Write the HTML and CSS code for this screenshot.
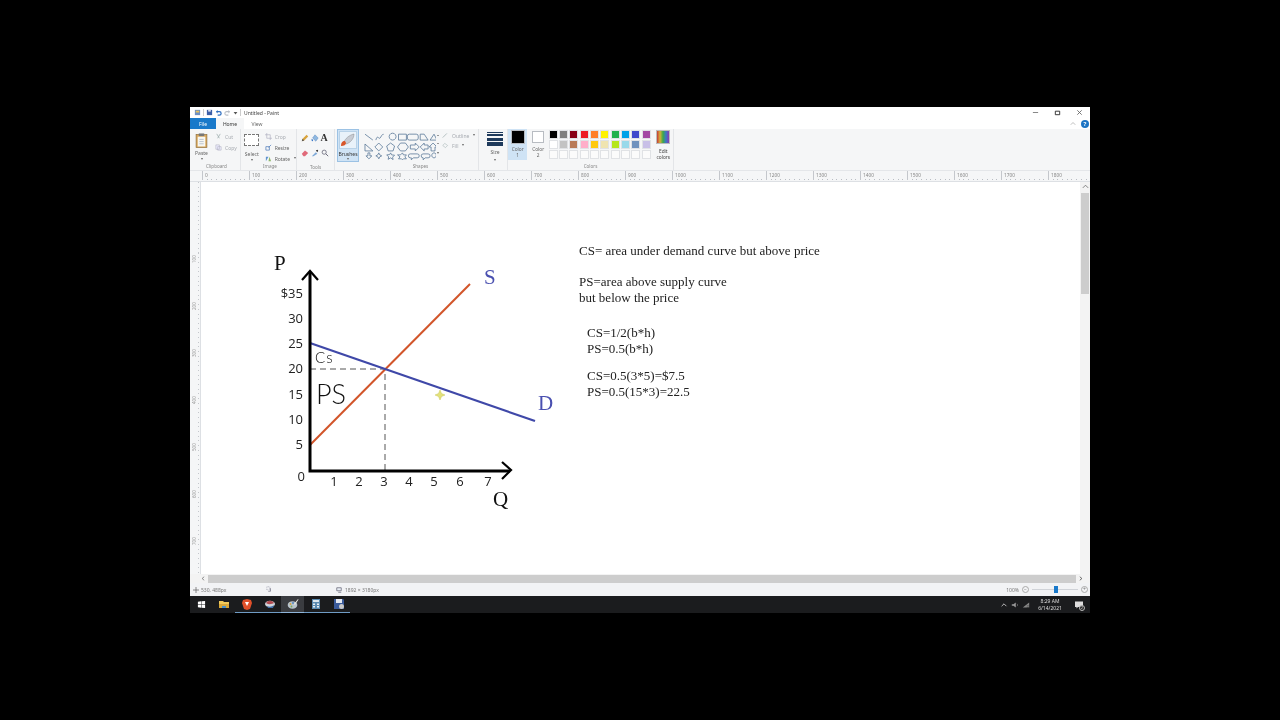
FILE: index.html
```html
<!DOCTYPE html>
<html lang="en">
<head>
  <meta charset="UTF-8" />
  <title>Untitled - Paint</title>
  <link rel="stylesheet" href="styles.css">
</head>
<body>
  <div class="screen">
    <div class="titlebar">
      <div class="quick">
        <svg class="qicon" viewBox="0 0 8 8"><rect x="1" y="1" width="6" height="6" fill="#6d8fc4"/><rect x="2" y="2" width="4" height="2" fill="#e8c15a"/></svg>
        <span class="qsep"></span>
        <svg class="qicon" viewBox="0 0 8 8"><rect x="1" y="1" width="6" height="6" fill="#3d5fa8"/><rect x="2.5" y="1" width="3" height="2" fill="#dfe6f2"/></svg>
        <svg class="qicon" viewBox="0 0 8 8"><path d="M2 3h3a2 2 0 0 1 0 4H3" fill="none" stroke="#2f6fc0" stroke-width="1.4"/><path d="M3 1 1 3l2 2z" fill="#2f6fc0"/></svg>
        <svg class="qicon" viewBox="0 0 8 8"><path d="M6 3H3a2 2 0 0 0 0 4h2" fill="none" stroke="#b9bec6" stroke-width="1.2"/><path d="M5 1l2 2-2 2z" fill="#b9bec6"/></svg>
        <svg class="qicon small" viewBox="0 0 8 8"><path d="M1 3h6L4 7z" fill="#555"/></svg>
        <span class="qsep"></span>
      </div>
      <span class="doc-title">Untitled - Paint</span>
      <div class="winbtns">
        <span class="winbtn"><svg viewBox="0 0 8 8"><path d="M1 4h6" stroke="#777"/></svg></span>
        <span class="winbtn"><svg viewBox="0 0 8 8"><path d="M1.5 2.5h5v4h-5z" fill="none" stroke="#222"/></svg></span>
        <span class="winbtn"><svg viewBox="0 0 8 8"><path d="M1.5 1.5l5 5M6.5 1.5l-5 5" stroke="#666"/></svg></span>
      </div>
    </div>

    <div class="tabs">
      <span class="tab tab-file">File</span>
      <span class="tab tab-active">Home</span>
      <span class="tab">View</span>
      <span class="help-wrap">
        <svg class="chev" viewBox="0 0 8 8"><path d="M1 5l3-3 3 3" fill="none" stroke="#aaa"/></svg>
        <span class="help">?</span>
      </span>
    </div>

    <div class="ribbon">
      <div class="group g-clipboard">
        <div class="group-body">
          <div class="bigbtn">
            <svg class="paste" viewBox="0 0 12 15"><rect x="1" y="2" width="10" height="12" fill="#d9a85c" stroke="#8a6a3a" stroke-width=".6"/><rect x="2.5" y="4" width="7" height="9" fill="#f7f7f2"/><rect x="3.5" y="1" width="5" height="2.4" fill="#777"/><path d="M4 6.500h4M4 8.500h4M4 10.500h4" stroke="#a9b4c4" stroke-width=".7"/></svg>
            <span>Paste</span>
            <i class="drop"></i>
          </div>
          <div class="stack muted">
            <span class="row"><svg viewBox="0 0 8 8"><path d="M2 1l3 5M6 1L3 6" stroke="#9aa" stroke-width=".8"/></svg>Cut</span>
            <span class="row"><svg viewBox="0 0 8 8"><path d="M1 1h4v5H1zM3 3h4v4H3z" fill="#eef" stroke="#aab" stroke-width=".6"/></svg>Copy</span>
          </div>
        </div>
        <div class="group-label">Clipboard</div>
      </div>

      <div class="group g-image">
        <div class="group-body">
          <div class="bigbtn select">
            <span class="marquee"></span>
            <span>Select</span>
            <i class="drop"></i>
          </div>
          <div class="stack">
            <span class="row muted"><svg viewBox="0 0 8 8"><path d="M2 0v6h6M0 2h6v6" fill="none" stroke="#aab" stroke-width=".7"/></svg>Crop</span>
            <span class="row"><svg viewBox="0 0 8 8"><path d="M1 3h4v4H1z" fill="none" stroke="#4a78b8" stroke-width=".8"/><path d="M4 4l3-3" stroke="#4a78b8" stroke-width=".8"/></svg>Resize</span>
            <span class="row"><svg viewBox="0 0 8 8"><path d="M1 2h3l-3 5z" fill="#5e93d0"/><path d="M5 2l2 5H4z" fill="#8fb66a"/></svg>Rotate <i class="drop inline"></i></span>
          </div>
        </div>
        <div class="group-label">Image</div>
      </div>

      <div class="group g-tools">
        <div class="tool-grid">
          <svg viewBox="0 0 10 10"><path d="M1 9l1-3 5-5 2 2-5 5z" fill="#d8a33c"/><path d="M1 9l1-3 2 2z" fill="#555"/></svg>
          <svg viewBox="0 0 10 10"><path d="M5 1l4 4-3 4-4-4z" fill="#8fb8e0" stroke="#4a78b8" stroke-width=".5"/><path d="M1 6c-1 2 0 3 1 3s1-2-1-3z" fill="#3a78c8"/></svg>
          <span class="tool-a">A</span>
          <svg viewBox="0 0 10 10"><path d="M1 6l4-4 4 3-4 4H3z" fill="#e06a7a"/></svg>
          <svg viewBox="0 0 10 10"><path d="M1 9l5-5 2 2-5 3z" fill="#7ca8d8"/><path d="M6 2l2 2 1-2-1-1z" fill="#333"/></svg>
          <svg viewBox="0 0 10 10"><circle cx="4" cy="4" r="2.600" fill="none" stroke="#667" stroke-width="1"/><path d="M6 6l3 3" stroke="#667" stroke-width="1.200"/></svg>
        </div>
        <div class="group-label">Tools</div>
      </div>

      <div class="brushes">
        <svg viewBox="0 0 16 16"><path d="M14 2C9 3 5 7 4 10l2 2c4-1 8-5 8-10z" fill="#c8ccd4" stroke="#777" stroke-width=".4"/><path d="M5 9c-3 0-4 2-4 5 3 0 5-1 5-3z" fill="#d8562a"/></svg>
        <span>Brushes</span>
        <i class="drop"></i>
      </div>

      <div class="group g-shapes">
        <div class="shapes-body">
          <div class="gallery">
            <svg viewBox="0 0 74 28" fill="none" stroke="#5a7898" stroke-width=".8">
              <path d="M2 2l8 6M13 8c2-7 3 1 5-3s2-2 3-3M30 1a3.500 3.500 0 1 0 .01 0M36 2h8v6h-8zM47 2h7q2 0 2 2v2q0 2-2 2h-7q-2 0-2-2V4q0-2 2-2zM58 8V2h4l4 6zM72 2l3 6h-7z"/>
              <path d="M2 19l8 0-8-7zM16 11l4 4-4 4-4-4zM28 11l4 3-1.500 5h-5L24 14zM38 11h5l3 4-3 4h-5l-3-4zM48 13h5v-2l4 4-4 4v-2h-5zM66 13h-4v-2l-4 4 4 4v-2h4zM75 15h-2v4h-4v-4h-2l4-4z"/>
              <path d="M5 21v3H3l3 3 3-3H7v-3zM16 21l1 2 2 1-2 1-1 2-1-2-2-1 2-1zM28 21l1 2 3 .300-2 2 .500 2.500L28 26l-2.500 1.500.5-2.500-2-2 3-.300zM40 21l1 2h3l-1.500 2 1.500 2h-3l-1 1-1-1h-3l1.500-2L35 23h3zM48 22h7q2 0 2 2t-2 2h-4l-2 2v-2h-1q-2 0-2-2t2-2zM61 22h5q2 0 2 2t-2 2h-3l-2 2v-2q-2 0-2-2t2-2zM72 21c3 0 3 5 0 5-3 0-3-5 0-5z"/>
            </svg>
            <div class="gallery-scroll"><i></i><i></i><i class="drop"></i></div>
          </div>
          <div class="stack muted outline">
            <span class="row"><svg viewBox="0 0 10 8"><path d="M1 7l6-6" stroke="#9aa" stroke-width="1"/></svg>Outline <i class="drop inline"></i></span>
            <span class="row"><svg viewBox="0 0 10 8"><path d="M4 1l4 3-3 3-4-3z" fill="none" stroke="#9aa" stroke-width=".7"/></svg>Fill <i class="drop inline"></i></span>
          </div>
        </div>
        <div class="group-label">Shapes</div>
      </div>

      <div class="group g-size">
        <div class="bigbtn size">
          <div class="size-lines"><i class="l1"></i><i class="l2"></i><i class="l3"></i><i class="l4"></i></div>
          <span>Size</span>
          <i class="drop"></i>
        </div>
      </div>

      <div class="group g-colors">
        <div class="colors-body">
          <div class="color-btn active">
            <span class="chip chip-black"></span>
            <span>Color<br>1</span>
          </div>
          <div class="color-btn">
            <span class="chip chip-white"></span>
            <span>Color<br>2</span>
          </div>
          <div class="palette">
            <i class="c-black"></i><i class="c-gray"></i><i class="c-maroon"></i><i class="c-red"></i><i class="c-orange"></i><i class="c-yellow"></i><i class="c-green"></i><i class="c-sky"></i><i class="c-indigo"></i><i class="c-purple"></i>
            <i class="c-white"></i><i class="c-silver"></i><i class="c-brown"></i><i class="c-pink"></i><i class="c-gold"></i><i class="c-cream"></i><i class="c-lime"></i><i class="c-ice"></i><i class="c-steel"></i><i class="c-lilac"></i>
            <i></i><i></i><i></i><i></i><i></i><i></i><i></i><i></i><i></i><i></i>
          </div>
          <div class="edit-colors">
            <span class="rainbow"></span>
            <span>Edit<br>colors</span>
          </div>
        </div>
        <div class="group-label">Colors</div>
      </div>
    </div>

    <div class="ruler-top">
      <span>0</span><span>100</span><span>200</span><span>300</span><span>400</span><span>500</span><span>600</span><span>700</span><span>800</span><span>900</span><span>1000</span><span>1100</span><span>1200</span><span>1300</span><span>1400</span><span>1500</span><span>1600</span><span>1700</span><span>1800</span>
    </div>

    <div class="workspace">
      <div class="ruler-left">
        <span>100</span><span>200</span><span>300</span><span>400</span><span>500</span><span>600</span><span>700</span><span>800</span>
      </div>
      <div class="canvas">
        <svg class="graph" viewBox="201 181 879 392">
          <path class="dash" d="M310 368H385V469"/>
          <path class="supply" d="M310 444L470 283"/>
          <path class="demand" d="M310 342L535 420"/>
          <path class="axis" d="M310 271V470H510"/>
          <path class="axis-head" d="M302 279L310 270L318 279M502 461L511 469L502 478"/>
          <text class="curve-name" x="484" y="283">S</text>
          <text class="curve-name" x="538" y="409">D</text>
          <text class="axis-name" x="274" y="269">P</text>
          <text class="axis-name" x="493" y="505">Q</text>
          <g class="tick-y">
            <text x="303" y="297">$35</text>
            <text x="303" y="322">30</text>
            <text x="303" y="347">25</text>
            <text x="303" y="372">20</text>
            <text x="303" y="398">15</text>
            <text x="303" y="423">10</text>
            <text x="303" y="448">5</text>
            <text x="305" y="480">0</text>
          </g>
          <g class="tick-x">
            <text x="334" y="485">1</text>
            <text x="359" y="485">2</text>
            <text x="384" y="485">3</text>
            <text x="409" y="485">4</text>
            <text x="434" y="485">5</text>
            <text x="460" y="485">6</text>
            <text x="488" y="485">7</text>
          </g>
          <text class="ink ink-cs" x="315" y="362">Cs</text>
          <text class="ink ink-ps" x="316" y="403">PS</text>
          <path class="pointer" d="M440 389l1.500 3.500 3.500 1.500-3.500 1.500-1.500 3.500-1.500-3.500-3.500-1.500 3.500-1.500z"/>
        </svg>
        <div class="notes">
          <p class="note-first">CS= area under demand curve but above price</p>
          <p class="note-gap">PS=area above supply curve<br>but below the price</p>
          <p class="note-indent note-formula">CS=1/2(b*h)<br>PS=0.5(b*h)</p>
          <p class="note-indent note-calc">CS=0.5(3*5)=$7.5<br>PS=0.5(15*3)=22.5</p>
        </div>
      </div>
      <div class="vscroll">
        <svg viewBox="0 0 10 10"><path d="M2 6l3-3 3 3" fill="none" stroke="#777"/></svg>
        <div class="vthumb"></div>
      </div>
    </div>

    <div class="hscroll">
      <svg viewBox="0 0 10 9"><path d="M6 2L3 4.500 6 7" fill="none" stroke="#666"/></svg>
      <div class="hthumb"></div>
      <svg viewBox="0 0 10 9"><path d="M4 2l3 2.500L4 7" fill="none" stroke="#333"/></svg>
    </div>

    <div class="statusbar">
      <span class="st-pos"><svg viewBox="0 0 8 8"><path d="M4 0v8M0 4h8" stroke="#666"/></svg>530, 488px</span>
      <span class="st-sel"><svg viewBox="0 0 8 8"><path d="M1 1h4v4H1z" fill="none" stroke="#99a" stroke-dasharray="1 1"/><path d="M6 3v4H3" fill="none" stroke="#778"/></svg></span>
      <span class="st-size"><svg viewBox="0 0 8 8"><path d="M1 1h6v4H1z" fill="#e9eef5" stroke="#667"/><path d="M3 7h4" stroke="#667"/></svg>1892 × 3180px</span>
      <span class="zoom">
        <span>100%</span>
        <span class="zoom-btn">−</span>
        <span class="zoom-track"><i></i></span>
        <span class="zoom-btn">+</span>
      </span>
    </div>

    <div class="taskbar">
      <span class="task start">
        <svg viewBox="0 0 10 10"><path d="M1 2l3.500-.500V4.800H1zM5 1.400L9 1v3.800H5zM1 5.200h3.500v3.300L1 8zM5 5.200h4V9l-4-.500z" fill="#fff"/></svg>
      </span>
      <span class="task">
        <svg viewBox="0 0 12 12"><path d="M1 3h4l1 1h5v6H1z" fill="#f0c95a"/><path d="M1 6h10v4H1z" fill="#d9a83a"/><path d="M4 8h4v2H4z" fill="#4a90c8"/></svg>
      </span>
      <span class="task open">
        <svg viewBox="0 0 12 12"><path d="M2 2l4-1 4 1 1 3-2 6-3 1-3-1-2-6z" fill="#e0502a"/><path d="M4 4h4L6 8z" fill="#fff"/></svg>
      </span>
      <span class="task open">
        <svg viewBox="0 0 12 12"><ellipse cx="6" cy="6" rx="5" ry="3.200" fill="#cfd4da"/><path d="M2 5c2-3 6-3 8 0-2 1-5 2-8 0z" fill="#b04a50"/><path d="M3 8c2 1 5 1 7-1l-1 3H4z" fill="#3f6ea8"/></svg>
      </span>
      <span class="task active">
        <svg viewBox="0 0 12 12"><ellipse cx="5.500" cy="7" rx="4.800" ry="3.800" fill="#b8c4cc"/><circle cx="3.500" cy="6" r=".9" fill="#d8a33c"/><circle cx="6" cy="5" r=".9" fill="#4a80c0"/><circle cx="4.500" cy="8.500" r=".9" fill="#7aa858"/><path d="M7 6l4-5 .5.500-3.500 5.500z" fill="#e8e8e0"/></svg>
      </span>
      <span class="task open">
        <svg viewBox="0 0 12 12"><rect x="2" y="1" width="8" height="10" fill="#5a8ab0"/><rect x="3" y="2" width="6" height="2" fill="#dbe6ee"/><path d="M3 5.500h2v1.500H3zM7 5.500h2v1.500H7zM3 8h2v1.500H3zM7 8h2v1.500H7z" fill="#e8eef2"/></svg>
      </span>
      <span class="task open">
        <svg viewBox="0 0 12 12"><path d="M1 1h9l1 1v9H1z" fill="#3a5a9a"/><rect x="3" y="1" width="6" height="4" fill="#e4e8f0"/><circle cx="8.500" cy="8.500" r="2.500" fill="#c8c8c8"/></svg>
      </span>
      <div class="tray">
        <svg viewBox="0 0 10 10"><path d="M2 6.500L5 3.500 8 6.500" fill="none" stroke="#ddd"/></svg>
        <svg viewBox="0 0 10 10"><path d="M1 4h2l3-2v6L3 6H1z" fill="#999"/><path d="M7.500 3.500c1 1 1 2 0 3" fill="none" stroke="#999" stroke-width=".7"/></svg>
        <svg viewBox="0 0 10 10"><path d="M1 8h8V2z" fill="#888"/><path d="M6 6h3M6 8h3" stroke="#222" stroke-width=".5"/></svg>
        <span class="clock">8:29 AM<br>6/14/2021</span>
        <span class="notify">
          <svg viewBox="0 0 10 10"><path d="M1 1.500h8v5.500H4L2.500 8.500V7H1z" fill="#ddd"/></svg>
          <b>2</b>
        </span>
      </div>
    </div>
  </div>
</body>
</html>
```

FILE: styles.css
```css
* {
  box-sizing: border-box;
}

body {
  background: #000;
  margin: 0;
  padding: 107px 0 0 190px;
  height: 720px;
  overflow: hidden;
  font-family: "Noto Sans", sans-serif;
}

i {
  display: block;
  font-style: normal;
}

.screen {
  width: 900px;
  height: 506px;
  background: #fff;
  display: flex;
  flex-direction: column;
  font-size: 5px;
  color: #555;
  filter: blur(0.25px);
}

/* title bar */
.titlebar {
  height: 11px;
  display: flex;
  align-items: center;
  padding-left: 4px;
  background: #fff;
}

.quick {
  display: flex;
  align-items: center;
  gap: 2px;
}

.qicon {
  width: 7px;
  height: 7px;
}

.qicon.small {
  width: 5px;
  height: 5px;
}

.qsep {
  width: 1px;
  height: 7px;
  background: #ccc;
}

.doc-title {
  margin-left: 3px;
  color: #444;
}

.winbtns {
  margin-left: auto;
  display: flex;
}

.winbtn {
  width: 22px;
  display: flex;
  justify-content: center;
}

.winbtn svg {
  width: 7px;
  height: 7px;
}

/* tabs */
.tabs {
  height: 11px;
  display: flex;
  align-items: stretch;
  background: #fff;
}

.tab {
  width: 26px;
  display: flex;
  align-items: center;
  justify-content: center;
  color: #666;
}

.tab-file {
  background: #1979ca;
  color: #fff;
}

.tab-active {
  width: 28px;
  background: #f5f6f7;
  color: #333;
}

.help-wrap {
  margin-left: auto;
  display: flex;
  align-items: center;
  gap: 5px;
  padding-right: 1px;
}

.chev {
  width: 6px;
  height: 6px;
}

.help {
  width: 8px;
  height: 8px;
  border-radius: 50%;
  background: #1c74c4;
  color: #fff;
  font-size: 6px;
  font-weight: 700;
  line-height: 8px;
  text-align: center;
}

/* ribbon */
.ribbon {
  height: 42px;
  background: #f5f6f7;
  display: flex;
  border-bottom: 1px solid #e4e6e9;
  color: #666;
  font-size: 5px;
  line-height: 6px;
}

.group {
  position: relative;
  display: flex;
  flex-direction: column;
  border-right: 1px solid #e3e5e8;
  padding-top: 3px;
}

.group-body {
  flex: 1;
  display: flex;
  gap: 5px;
}

.group-label {
  height: 7px;
  text-align: center;
  color: #888;
  font-size: 4.6px;
  line-height: 6px;
}

.g-clipboard { width: 51px; padding-left: 3px; }
.g-image { width: 56px; padding-left: 3px; }
.g-tools { width: 38px; }
.g-shapes { width: 116px; margin-left: 4px; }
.g-size { width: 29px; padding: 3px 0 0 5px; }
.g-colors { width: 166px; }

.bigbtn {
  width: 17px;
  display: flex;
  flex-direction: column;
  align-items: center;
  gap: 1px;
}

.paste {
  width: 13px;
  height: 17px;
}

.drop {
  width: 0;
  height: 0;
  margin-top: 1px;
  border-left: 1.500px solid transparent;
  border-right: 1.500px solid transparent;
  border-top: 2px solid #666;
}

.drop.inline {
  display: inline-block;
  margin: 0 0 1px 1px;
}

.stack {
  display: flex;
  flex-direction: column;
  gap: 4px;
  padding-top: 1px;
}

.row {
  display: flex;
  align-items: center;
  gap: 3px;
  white-space: nowrap;
}

.row svg {
  width: 7px;
  height: 7px;
  flex: none;
}

.muted {
  color: #a7abb1;
}

.marquee {
  width: 15px;
  height: 12px;
  margin: 2px 0 4px;
  border: 1px dashed #777;
  background: #fff;
}

.tool-grid {
  flex: 1;
  display: grid;
  grid-template-columns: repeat(3, 10px);
  grid-auto-rows: 15px;
  justify-content: center;
  padding-top: 2px;
}

.tool-grid svg {
  width: 8px;
  height: 8px;
}

.tool-a {
  font-family: "Liberation Serif", serif;
  font-size: 10px;
  font-weight: 700;
  line-height: 8px;
  color: #333;
}

.brushes {
  width: 22px;
  margin-left: 2px;
  height: 33px;
  background: #cfe3f5;
  border: 1px solid #9cc2e4;
  display: flex;
  flex-direction: column;
  align-items: center;
  color: #333;
}

.brushes svg {
  width: 18px;
  height: 18px;
  background: #e9f2fa;
  border: 1px solid #b8d2e8;
  margin-top: 1px;
  margin-bottom: 2px;
}

.shapes-body {
  flex: 1;
  display: flex;
}

.gallery {
  display: flex;
  width: 79px;
  height: 29px;
}

.gallery svg {
  width: 73px;
  height: 28px;
}

.gallery-scroll {
  margin-left: 1px;
  display: flex;
  flex-direction: column;
  gap: 7px;
  padding-top: 3px;
  align-items: center;
}

.gallery-scroll i:not(.drop) {
  width: 2px;
  height: 1px;
  background: #999;
}

.outline {
  gap: 3px;
  padding-top: 0;
}

.size {
  width: 22px;
  gap: 3px;
}

.size-lines {
  width: 16px;
  height: 14px;
  display: flex;
  flex-direction: column;
  justify-content: space-between;
}

.size-lines i {
  background: #1e3a5c;
}

.l1 { height: 1px; }
.l2 { height: 2px; }
.l3 { height: 3px; }
.l4 { height: 4px; }

.colors-body {
  flex: 1;
  display: flex;
  margin-top: -3px;
}

.color-btn {
  width: 20px;
  height: 31px;
  display: flex;
  flex-direction: column;
  align-items: center;
  gap: 2px;
  padding-top: 1px;
  margin-right: 1px;
  text-align: center;
  line-height: 6px;
  font-size: 4.800px;
}

.color-btn.active {
  background: #cfe3f5;
}

.chip {
  width: 14px;
  height: 14px;
  border: 1px solid #b8bcc2;
}

.chip-black { background: #000; }
.chip-white {
  background: #fff;
  width: 12px;
  height: 12px;
  margin: 1px 0 1px;
}

.palette {
  margin: 1px 0 0 -1px;
  width: 103px;
  display: grid;
  grid-template-columns: repeat(10, 9px);
  grid-auto-rows: 9px;
  gap: 1px 1.300px;
  margin-left: -1px;
  align-self: flex-start;
}

.palette i {
  border: 1px solid #e0e2e5;
  background: #fbfbfb;
}

.color-btn + .palette {
  margin-left: 0;
}

.c-black { background: #000 !important; }
.c-gray { background: #7f7f7f !important; }
.c-maroon { background: #880015 !important; }
.c-red { background: #ed1c24 !important; }
.c-orange { background: #ff7f27 !important; }
.c-yellow { background: #fff200 !important; }
.c-green { background: #22b14c !important; }
.c-sky { background: #00a2e8 !important; }
.c-indigo { background: #3f48cc !important; }
.c-purple { background: #a349a4 !important; }
.c-white { background: #fff !important; }
.c-silver { background: #c3c3c3 !important; }
.c-brown { background: #b97a57 !important; }
.c-pink { background: #ffaec9 !important; }
.c-gold { background: #ffc90e !important; }
.c-cream { background: #efe4b0 !important; }
.c-lime { background: #b5e61d !important; }
.c-ice { background: #99d9ea !important; }
.c-steel { background: #7092be !important; }
.c-lilac { background: #c8bfe7 !important; }

.edit-colors {
  width: 20px;
  margin-left: 3px;
  display: flex;
  flex-direction: column;
  align-items: center;
  gap: 4px;
  padding-top: 1px;
  text-align: center;
  line-height: 6px;
  font-size: 4.800px;
  color: #444;
}

.rainbow {
  width: 14px;
  height: 14px;
  border: 1px solid #bbb;
  background: linear-gradient(90deg, #c23a3a, #d8b13a, #3aa84a, #3a78c8, #8a3ab0);
}

/* rulers */
.ruler-top {
  height: 11px;
  padding-left: 12px;
  display: flex;
  background-color: #f5f6f7;
  background-image: repeating-linear-gradient(90deg, #b9bdc3 0 1px, transparent 1px 4.700px);
  background-size: 100% 1px;
  background-position: 12px 8px;
  background-repeat: no-repeat;
  border-bottom: 1px solid #dde0e4;
  overflow: hidden;
}

.ruler-top span {
  flex: 0 0 47px;
  height: 9px;
  padding: 1px 0 0 2px;
  border-left: 1px solid #c4c7cc;
  font-size: 4.800px;
  line-height: 6px;
  color: #888;
}

.workspace {
  height: 392px;
  display: flex;
  background: #f0f3f8;
}

.ruler-left {
  width: 11px;
  padding-top: 34px;
  background-color: #f5f6f7;
  background-image: repeating-linear-gradient(180deg, #c4c7cc 0 1px, transparent 1px 4.700px);
  background-size: 1px 100%;
  background-position: 8px 0;
  background-repeat: no-repeat;
  border-right: 1px solid #dde0e4;
  display: flex;
  flex-direction: column;
  overflow: hidden;
}

.ruler-left span {
  flex: 0 0 47px;
  writing-mode: vertical-rl;
  transform: rotate(180deg);
  font-size: 4.500px;
  line-height: 8px;
  color: #999;
  text-align: left;
}

.canvas {
  position: relative;
  flex: 1;
  background: #fff;
}

.graph {
  position: absolute;
  top: 0;
  left: 0;
  width: 879px;
  height: 392px;
}

.axis {
  fill: none;
  stroke: #000;
  stroke-width: 3;
}

.axis-head {
  fill: none;
  stroke: #000;
  stroke-width: 2.200;
}

.dash {
  fill: none;
  stroke: #555;
  stroke-width: 1;
  stroke-dasharray: 6 4;
}

.supply {
  stroke: #d2552a;
  stroke-width: 2;
}

.demand {
  stroke: #3f48a8;
  stroke-width: 2.200;
}

.curve-name {
  font-family: "Liberation Serif", serif;
  font-size: 21px;
  fill: #4a50b0;
}

.axis-name {
  font-family: "Liberation Serif", serif;
  font-size: 21px;
  fill: #111;
}

.tick-y text,
.tick-x text {
  font-family: "Open Sans", sans-serif;
  font-size: 13px;
  fill: #222;
}

.tick-y text {
  text-anchor: end;
}

.tick-x text {
  text-anchor: middle;
}

.ink {
  font-family: "Lato", sans-serif;
  font-weight: 300;
  fill: #111;
}

.ink-cs {
  font-size: 15px;
  letter-spacing: 1px;
}

.ink-ps {
  font-size: 27px;
}

.pointer {
  fill: #e4e27a;
  stroke: #c9c65c;
  stroke-width: .5;
}

.notes {
  position: absolute;
  top: 61px;
  left: 378px;
  font-family: "Liberation Serif", serif;
  font-size: 13px;
  line-height: 16px;
  color: #222;
}

.notes p {
  margin: 0;
  white-space: nowrap;
}

.note-gap {
  margin-top: 15px !important;
}

.note-indent {
  padding-left: 8px;
}

.note-formula {
  margin-top: 19px !important;
}

.note-calc {
  margin-top: 11px !important;
}

/* scrollbars */
.vscroll {
  width: 10px;
  background: #f3f3f3;
  display: flex;
  flex-direction: column;
  align-items: center;
}

.vscroll svg {
  width: 9px;
  height: 10px;
}

.vthumb {
  width: 8px;
  height: 101px;
  margin-top: 1px;
  background: #cdcdcd;
}

.hscroll {
  height: 9px;
  background: #f3f3f3;
  display: flex;
  align-items: center;
  padding-left: 10px;
}

.hscroll svg {
  width: 7px;
  height: 9px;
  flex: none;
}

.hthumb {
  width: 868px;
  height: 8px;
  margin: 0 1px;
  background: #cdcdcd;
}

/* status bar */
.statusbar {
  height: 13px;
  background: #f2f3f5;
  display: flex;
  align-items: center;
  color: #777;
  font-size: 5px;
  padding-left: 3px;
}

.statusbar svg {
  width: 6px;
  height: 6px;
  flex: none;
}

.st-pos {
  width: 73px;
  display: flex;
  align-items: center;
  gap: 2px;
}

.st-sel {
  width: 70px;
}

.st-size {
  display: flex;
  align-items: center;
  gap: 3px;
}

.zoom {
  margin-left: auto;
  display: flex;
  align-items: center;
  gap: 3px;
  padding-right: 2px;
}

.zoom-btn {
  width: 7px;
  height: 7px;
  border: 1px solid #aaa;
  border-radius: 50%;
  font-size: 5px;
  line-height: 4px;
  text-align: center;
}

.zoom-track {
  position: relative;
  width: 46px;
  height: 1px;
  background: #d0d3d8;
}

.zoom-track i {
  position: absolute;
  top: -3px;
  left: 22px;
  width: 4px;
  height: 7px;
  background: #1979ca;
}

/* taskbar */
.taskbar {
  flex: 1;
  background: #1b1c1e;
  display: flex;
  align-items: stretch;
}

.task {
  width: 23px;
  display: flex;
  align-items: center;
  justify-content: center;
  border-bottom: 1px solid transparent;
}

.task svg {
  width: 12px;
  height: 12px;
}

.task.start {
  width: 22px;
}

.task.start svg {
  width: 9px;
  height: 9px;
}

.task.open {
  border-bottom-color: #6f9bc4;
}

.task.active {
  background: #3a3c40;
  border-bottom-color: #8fb4d8;
}

.tray {
  margin-left: auto;
  display: flex;
  align-items: center;
  gap: 3px;
  color: #ddd;
}

.tray svg {
  width: 8px;
  height: 8px;
}

.clock {
  width: 28px;
  margin-left: 3px;
  text-align: center;
  font-size: 5px;
  line-height: 7px;
}

.notify {
  position: relative;
  width: 23px;
  display: flex;
  justify-content: center;
}

.notify svg {
  width: 10px;
  height: 10px;
}

.notify b {
  position: absolute;
  top: 5px;
  left: 12px;
  width: 6px;
  height: 6px;
  border-radius: 50%;
  background: #222;
  border: 1px solid #bbb;
  font-size: 4px;
  line-height: 4px;
  font-weight: 400;
  text-align: center;
}
```
